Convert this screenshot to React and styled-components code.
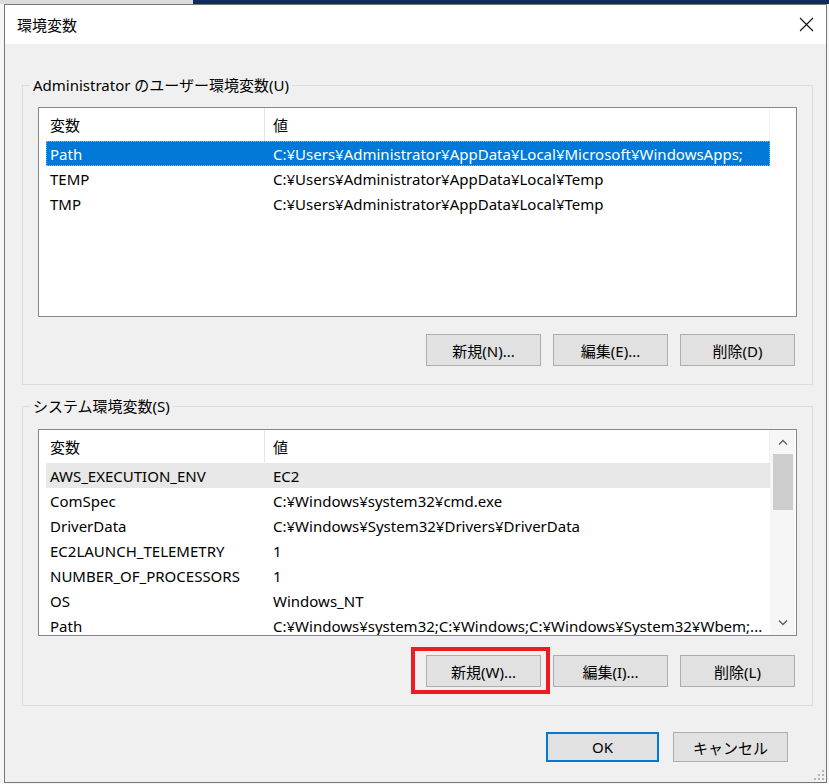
import styled, { createGlobalStyle } from "styled-components"

const GlobalStyle = createGlobalStyle`
  html, body {
    margin: 0;
    padding: 0;
  }
  body {
    background:
      linear-gradient(to right, #dcdcdc 0 193px, #0d2b5e 193px) top left / 100% 4px no-repeat,
      #f6f6f6;
    font-family: "Noto Sans", "Noto Sans CJK JP", sans-serif;
    color: #000;
  }
`

const Desktop = styled.div`
  padding: 4px 0 0 4px;
`

const Window = styled.div`
  position: relative;
  width: 823px;
  height: 779px;
  box-sizing: border-box;
  border: 1px solid #777;
  background: #f0f0f0;
  display: flex;
  flex-direction: column;
`

const TitleBar = styled.div`
  height: 39px;
  background: #fff;
  display: flex;
  align-items: center;
  padding-left: 12px;
  font-size: 15px;
`

const Caption = styled.span`
  flex: 1;
`

const CloseButton = styled.div`
  width: 40px;
  height: 39px;
  display: flex;
  align-items: center;
  justify-content: center;
`

const Body = styled.div`
  flex: 1;
  padding: 31px 13px 0 17px;
  display: flex;
  flex-direction: column;
`

const Group = styled.fieldset`
  margin: 0 0 ${p => p.$gap || 0}px;
  padding: ${p => p.$top || 12}px 15px 18px;
  border: 1px solid #dcdcdc;
  min-width: 0;
`

const Legend = styled.legend`
  padding: 0 3px;
  margin-left: -8px;
  font-size: 15px;
  line-height: 20px;
`

const List = styled.div`
  height: ${p => p.$height}px;
  box-sizing: border-box;
  border: 1px solid #828790;
  background: #fff;
  display: flex;
  overflow: hidden;
`

const ListContent = styled.div`
  width: 731px;
  overflow: hidden;
`

const Header = styled.div`
  display: flex;
  height: 33px;
  align-items: center;
  font-size: 15px;
  border-right: 1px solid #f0f0f0;
`

const HeaderCell = styled.div`
  width: ${p => p.$width ? `${p.$width}px` : "auto"};
  flex: ${p => p.$width ? "none" : 1};
  height: 100%;
  display: flex;
  align-items: center;
  box-sizing: border-box;
  padding-left: ${p => p.$pad}px;
  border-right: ${p => p.$width ? "1px solid #e5e5e5" : "none"};
`

const Row = styled.div`
  display: flex;
  height: 25px;
  align-items: center;
  margin-left: 7px;
  font-size: 15px;
  white-space: nowrap;
  box-sizing: border-box;
  background: ${p => p.$selected ? "#0078d7" : p.$hover ? "#e8e8e8" : "transparent"};
  color: ${p => p.$selected ? "#fff" : "#000"};
  outline: ${p => p.$selected ? "1px dotted #f2a348" : "none"};
  outline-offset: -1px;
`

const NameCell = styled.div`
  width: 219px;
  flex: none;
  padding-left: 4px;
  box-sizing: border-box;
  overflow: hidden;
`

const ValueCell = styled.div`
  flex: 1;
  padding-left: 8px;
  overflow: hidden;
`

const ScrollBar = styled.div`
  width: 25px;
  flex: none;
  background: ${p => p.$visible ? "#f6f6f6" : "#fff"};
  display: flex;
  flex-direction: column;
  align-items: center;
`

const Arrow = styled.div`
  height: 24px;
  width: 100%;
  display: flex;
  align-items: center;
  justify-content: center;
`

const Thumb = styled.div`
  width: 20px;
  height: 56px;
  background: #cdcdcd;
`

const Track = styled.div`
  flex: 1;
`

const ButtonRow = styled.div`
  display: flex;
  justify-content: flex-end;
  gap: 12px;
  margin-top: ${p => p.$top}px;
  padding-right: 2px;
`

const Button = styled.div`
  width: ${p => p.$width || 115}px;
  height: ${p => p.$height || 32}px;
  box-sizing: border-box;
  border: ${p => p.$default ? "2px solid #0078d7" : "1px solid #adadad"};
  background: #e1e1e1;
  display: flex;
  align-items: center;
  justify-content: center;
  font-size: 15px;
`

/* red call-out frame drawn around a button without moving it */
const Marked = styled.div`
  border: 4px solid #ed1c24;
  padding: 4px 5px 3px 11px;
  margin: -8px -9px -7px -15px;
`

const Footer = styled.div`
  display: flex;
  justify-content: flex-end;
  gap: 14px;
  margin-top: 26px;
  padding-right: 25px;
`

const Grip = styled.svg`
  position: absolute;
  right: 2px;
  bottom: 2px;
`

const userVars = [
  ["Path", "C:¥Users¥Administrator¥AppData¥Local¥Microsoft¥WindowsApps;"],
  ["TEMP", "C:¥Users¥Administrator¥AppData¥Local¥Temp"],
  ["TMP", "C:¥Users¥Administrator¥AppData¥Local¥Temp"],
]

const systemVars = [
  ["AWS_EXECUTION_ENV", "EC2"],
  ["ComSpec", "C:¥Windows¥system32¥cmd.exe"],
  ["DriverData", "C:¥Windows¥System32¥Drivers¥DriverData"],
  ["EC2LAUNCH_TELEMETRY", "1"],
  ["NUMBER_OF_PROCESSORS", "1"],
  ["OS", "Windows_NT"],
  ["Path", "C:¥Windows¥system32;C:¥Windows;C:¥Windows¥System32¥Wbem;..."],
]

const Chevron = ({ up }) => (
  <svg width="10" height="6" viewBox="0 0 10 6">
    <polyline
      points={up ? "1,5.5 5,1.5 9,5.5" : "1,0.5 5,4.5 9,0.5"}
      fill="none"
      stroke="#606060"
      strokeWidth="1.4"
    />
  </svg>
)

const VarList = ({ rows, height, selected, hover, scroll }) => (
  <List $height={height}>
    <ListContent>
      <Header>
        <HeaderCell $width={226} $pad={11}>変数</HeaderCell>
        <HeaderCell $pad={8}>値</HeaderCell>
      </Header>
      {rows.map(([name, value], i) => (
        <Row key={name + i} $selected={i === selected} $hover={i === hover}>
          <NameCell>{name}</NameCell>
          <ValueCell>{value}</ValueCell>
        </Row>
      ))}
    </ListContent>
    <ScrollBar $visible={scroll}>
      {scroll && (
        <>
          <Arrow><Chevron up /></Arrow>
          <Thumb />
          <Track />
          <Arrow><Chevron /></Arrow>
        </>
      )}
    </ScrollBar>
  </List>
)

const App = () => {
  return (
    <Desktop>
      <GlobalStyle />
      <Window>
        <TitleBar>
          <Caption>環境変数</Caption>
          <CloseButton>
            <svg width="15" height="15" viewBox="0 0 15 15">
              <path d="M1 1 L14 14 M14 1 L1 14" stroke="#111" strokeWidth="1.1" />
            </svg>
          </CloseButton>
        </TitleBar>

        <Body>
          <Group $gap={11}>
            <Legend>Administrator のユーザー環境変数(U)</Legend>
            <VarList rows={userVars} height={210} selected={0} />
            <ButtonRow $top={17}>
              <Button>新規(N)...</Button>
              <Button>編集(E)...</Button>
              <Button>削除(D)</Button>
            </ButtonRow>
          </Group>

          <Group $top={13}>
            <Legend>システム環境変数(S)</Legend>
            <VarList rows={systemVars} height={207} hover={0} scroll />
            <ButtonRow $top={19}>
              <Marked>
                <Button>新規(W)...</Button>
              </Marked>
              <Button>編集(I)...</Button>
              <Button>削除(L)</Button>
            </ButtonRow>
          </Group>

          <Footer>
            <Button $default $width={113} $height={30}>OK</Button>
            <Button $width={115} $height={30}>キャンセル</Button>
          </Footer>
        </Body>

        <Grip width="10" height="10" viewBox="0 0 10 10">
          <g fill="#b5b5b5">
            <rect x="8" y="0" width="2" height="2" />
            <rect x="4" y="4" width="2" height="2" />
            <rect x="8" y="4" width="2" height="2" />
            <rect x="0" y="8" width="2" height="2" />
            <rect x="4" y="8" width="2" height="2" />
            <rect x="8" y="8" width="2" height="2" />
          </g>
        </Grip>
      </Window>
    </Desktop>
  )
}

export default App
